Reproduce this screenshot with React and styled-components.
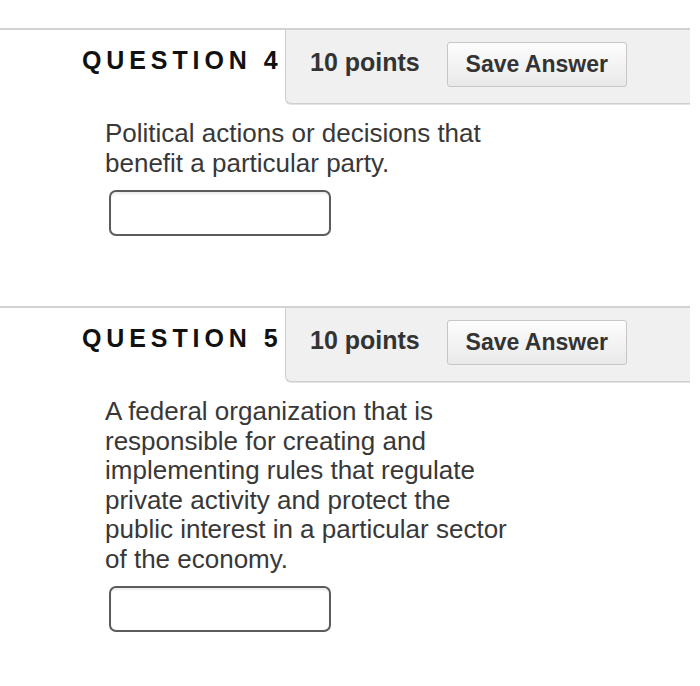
import React from "react";
import styled, { createGlobalStyle } from "styled-components";

const Global = createGlobalStyle`
  html, body { margin: 0; padding: 0; background: #ffffff; }
  body { font-family: "Liberation Sans", Arial, sans-serif; }
`;

const Page = styled.div`
  width: 690px;
  padding-top: 28px;
  display: flex;
  flex-direction: column;
`;

const Section = styled.section`
  border-top: 2px solid #d2d2d2;
  display: flex;
  flex-direction: column;
  margin-bottom: ${(p) => p.$after}px;
`;

const Header = styled.div`
  display: flex;
  align-items: flex-start;
`;

const Title = styled.h2`
  margin: 18px 0 0 0;
  padding-left: 82px;
  width: 285px;
  flex-shrink: 0;
  box-sizing: border-box;
  font-size: 25px;
  line-height: 24px;
  font-weight: 700;
  letter-spacing: 4.9px;
  color: #111111;
  white-space: nowrap;
`;

const PointsBox = styled.div`
  flex: 1;
  display: flex;
  align-items: flex-start;
  gap: 27px;
  padding: 12px 0 16px 24px;
  background: #f0f0f0;
  border-left: 1px solid #cfcfcf;
  border-bottom: 1px solid #cfcfcf;
  border-bottom-left-radius: 6px;
  box-shadow: 0 1px 0 #e4e4e4;
`;

const Points = styled.span`
  margin-top: 8px;
  font-size: 25px;
  line-height: 25px;
  font-weight: 700;
  color: #333333;
  white-space: nowrap;
`;

const SaveButton = styled.button`
  width: 180px;
  height: 45px;
  padding: 0;
  border: 1px solid #c6c6c6;
  border-radius: 3px;
  background: linear-gradient(#fdfdfd, #e9e9e9);
  font-family: "Liberation Sans", Arial, sans-serif;
  font-size: 23px;
  font-weight: 700;
  color: #333333;
  line-height: 43px;
`;

const Body = styled.div`
  padding: 15px 0 0 105px;
  display: flex;
  flex-direction: column;
  align-items: flex-start;
`;

const Prompt = styled.p`
  margin: 0;
  font-size: 26px;
  line-height: 29.5px;
  color: #383838;
`;

const Line = styled.span`
  display: block;
  white-space: nowrap;
`;

const AnswerInput = styled.input`
  margin: 12px 0 0 4px;
  width: 222px;
  height: 46px;
  box-sizing: border-box;
  border: 2px solid #5c5c5c;
  border-radius: 7px;
  background: #ffffff;
  box-shadow: inset 0 2px 2px rgba(0, 0, 0, 0.08);
  outline: none;
`;

const questions = [
  {
    n: 4,
    lines: ["Political actions or decisions that", "benefit a particular party."],
    after: 70,
  },
  {
    n: 5,
    lines: [
      "A federal organization that is",
      "responsible for creating and",
      "implementing rules that regulate",
      "private activity and protect the",
      "public interest in a particular sector",
      "of the economy.",
    ],
    after: 0,
  },
];

export default function App() {
  return (
    <>
      <Global />
      <Page>
        {questions.map((q) => (
          <Section key={q.n} $after={q.after}>
            <Header>
              <Title>QUESTION {q.n}</Title>
              <PointsBox>
                <Points>10 points</Points>
                <SaveButton type="button">Save Answer</SaveButton>
              </PointsBox>
            </Header>
            <Body>
              <Prompt>
                {q.lines.map((l) => (
                  <Line key={l}>{l}</Line>
                ))}
              </Prompt>
              <AnswerInput type="text" />
            </Body>
          </Section>
        ))}
      </Page>
    </>
  );
}
